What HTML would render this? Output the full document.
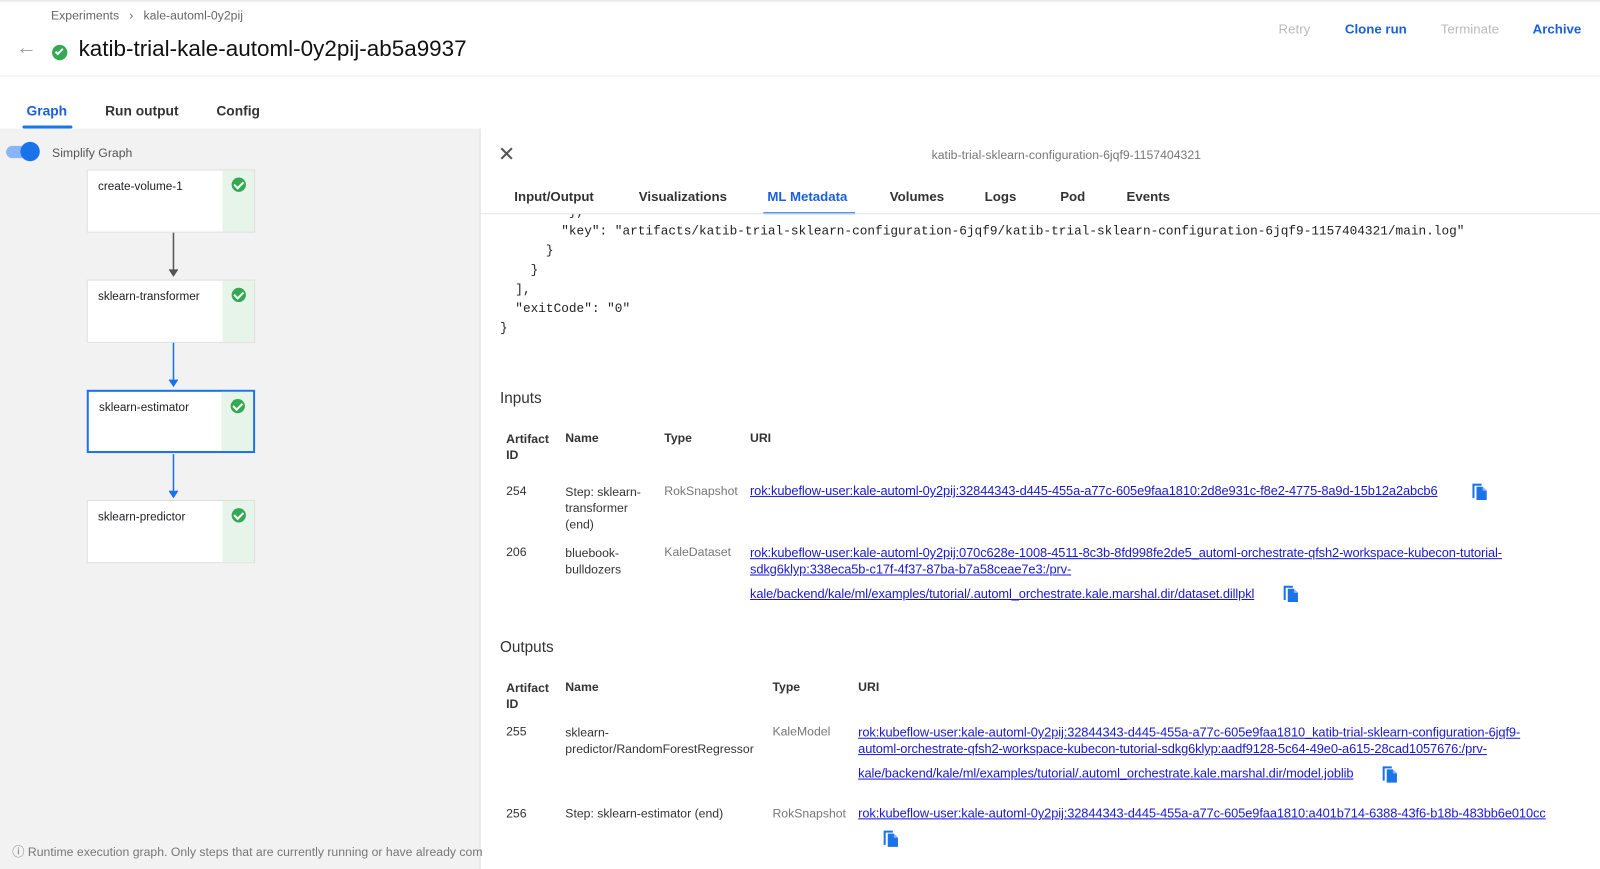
<!DOCTYPE html>
<html><head><style>
*{margin:0;padding:0;box-sizing:border-box}
body{width:1600px;height:852px;overflow:hidden;background:#fff;font-family:"Liberation Sans",sans-serif;color:#202124;position:relative}
#w{position:absolute;left:0;top:0;width:1568px;height:835px;transform:scale(1.0204);transform-origin:0 0}
.a{position:absolute;white-space:nowrap}
.t{font-size:12px}
.lnk{color:#1a1acc;text-decoration:underline;font-size:12.6px;letter-spacing:-0.1px}
.mono{font-family:"Liberation Mono",monospace;font-size:12.5px;color:#222;white-space:pre}
.node{position:absolute;left:85px;width:165px;height:62px;background:#fff;border:1px solid #ddd;font-size:11.5px}
.node span{position:absolute;left:10px;top:10px}
.node .g{position:absolute;right:0;top:0;width:31px;height:100%;background:#e6f4ea}
.chk{position:absolute;right:8px;top:7px;width:14px;height:14px;border-radius:50%;background:#34a853}
.chk:after{content:"";position:absolute;left:4px;top:2px;width:4px;height:7px;border:solid #fff;border-width:0 2px 2px 0;transform:rotate(45deg)}
.copy{position:absolute;width:16px;height:18px}
</style></head><body><div id="w">
<div class="a" style="left:0;top:0;width:1568px;height:3px;background:linear-gradient(#e6e6e6,#fff)"></div>
<div class="a t" style="left:50px;top:8px;color:#666">Experiments &nbsp;&nbsp;›&nbsp;&nbsp; kale-automl-0y2pij</div>
<div class="a" style="left:16px;top:36px;font-size:20px;color:#999">←</div>
<div class="a" style="left:51px;top:44px;width:15px;height:15px;border-radius:50%;background:#34a853"><div style="position:absolute;left:5px;top:2px;width:4px;height:8px;border:solid #fff;border-width:0 2px 2px 0;transform:rotate(45deg)"></div></div>
<div class="a" style="left:77px;top:35px;font-size:22px;color:#111">katib-trial-kale-automl-0y2pij-ab5a9937</div>
<div class="a" style="left:1253px;top:21px;font-size:13px;color:#bbb">Retry</div>
<div class="a" style="left:1318px;top:21px;font-size:13px;color:#1a5fe0;font-weight:bold">Clone run</div>
<div class="a" style="left:1412px;top:21px;font-size:13px;color:#bbb">Terminate</div>
<div class="a" style="left:1502px;top:21px;font-size:13px;color:#1a5fe0;font-weight:bold">Archive</div>
<div class="a" style="left:0;top:74px;width:1568px;height:1px;background:#eee"></div>
<div class="a" style="left:26px;top:101px;font-size:13.5px;color:#1a5fe0;font-weight:bold">Graph</div>
<div class="a" style="left:22px;top:123px;width:49px;height:3px;background:#1a73e8;border-radius:2px"></div>
<div class="a" style="left:103px;top:101px;font-size:13.5px;color:#333;font-weight:bold">Run output</div>
<div class="a" style="left:212px;top:101px;font-size:13.5px;color:#333;font-weight:bold">Config</div>
<div class="a" style="left:0;top:126px;width:471px;height:726px;background:#f2f2f2;border-right:1px solid #ddd"></div>
<div class="a" style="left:6px;top:143px;width:30px;height:12px;border-radius:6px;background:#8ab4f8"></div>
<div class="a" style="left:20px;top:139px;width:19px;height:19px;border-radius:50%;background:#1a73e8"></div>
<div class="a t" style="left:51px;top:143px;color:#555">Simplify Graph</div>
<div class="node" style="top:166px"><span>create-volume-1</span><div class="g"><div class="chk"></div></div></div>
<div class="node" style="top:274px"><span>sklearn-transformer</span><div class="g"><div class="chk"></div></div></div>
<div class="node" style="top:382px;border:2px solid #1a73e8"><span>sklearn-estimator</span><div class="g"><div class="chk"></div></div></div>
<div class="node" style="top:490px"><span>sklearn-predictor</span><div class="g"><div class="chk"></div></div></div>
<svg class="a" style="left:160px;top:228px" width="20" height="262"><path d="M10 0V40M6 36l4 6 4-6" stroke="#555" stroke-width="1.5" fill="#555"/><path d="M10 108V148M6 144l4 6 4-6" stroke="#1a73e8" stroke-width="1.5" fill="#1a73e8"/><path d="M10 217V257M6 253l4 6 4-6" stroke="#1a73e8" stroke-width="1.5" fill="#1a73e8"/></svg>
<div class="a" style="left:12px;top:826px;font-size:12px;color:#777">ⓘ Runtime execution graph. Only steps that are currently running or have already com</div>
<div class="a" style="left:488px;top:139px;font-size:20px;color:#555">✕</div>
<div class="a" style="left:913px;top:145px;font-size:12px;color:#777">katib-trial-sklearn-configuration-6jqf9-1157404321</div>
<div class="a" style="left:504px;top:185px;font-size:13px;color:#333;font-weight:bold">Input/Output</div>
<div class="a" style="left:626px;top:185px;font-size:13px;color:#333;font-weight:bold">Visualizations</div>
<div class="a" style="left:752px;top:185px;font-size:13px;color:#1a5fe0;font-weight:bold">ML Metadata</div>
<div class="a" style="left:748px;top:208px;width:90px;height:2px;background:#1a73e8"></div>
<div class="a" style="left:872px;top:185px;font-size:13px;color:#333;font-weight:bold">Volumes</div>
<div class="a" style="left:965px;top:185px;font-size:13px;color:#333;font-weight:bold">Logs</div>
<div class="a" style="left:1039px;top:185px;font-size:13px;color:#333;font-weight:bold">Pod</div>
<div class="a" style="left:1104px;top:185px;font-size:13px;color:#333;font-weight:bold">Events</div>
<div class="a" style="left:471px;top:209px;width:1097px;height:1px;background:#e6e6e6"></div>
<div class="a mono" style="left:490px;top:199px;line-height:19px;clip-path:inset(11px 0 0 0)">         },
        "key": "artifacts/katib-trial-sklearn-configuration-6jqf9/katib-trial-sklearn-configuration-6jqf9-1157404321/main.log"
      }
    }
  ],
  "exitCode": "0"
}</div>
<div class="a" style="left:490px;top:382px;font-size:15px;color:#333">Inputs</div>
<div class="a t" style="left:496px;top:422px;color:#333;font-weight:bold;line-height:16px">Artifact<br>ID</div>
<div class="a t" style="left:554px;top:422px;font-weight:bold;color:#333">Name</div>
<div class="a t" style="left:651px;top:422px;font-weight:bold;color:#333">Type</div>
<div class="a t" style="left:735px;top:422px;font-weight:bold;color:#333">URI</div>
<div class="a t" style="left:496px;top:474px;color:#333">254</div>
<div class="a t" style="left:554px;top:474px;color:#333;line-height:16px">Step: sklearn-<br>transformer<br>(end)</div>
<div class="a t" style="left:651px;top:474px;color:#777">RokSnapshot</div>
<div class="a lnk" style="left:735px;top:474px">rok:kubeflow-user:kale-automl-0y2pij:32844343-d445-455a-a77c-605e9faa1810:2d8e931c-f8e2-4775-8a9d-15b12a2abcb6</div>
<div class="a t" style="left:496px;top:534px;color:#333">206</div>
<div class="a t" style="left:554px;top:534px;color:#333;line-height:16px">bluebook-<br>bulldozers</div>
<div class="a t" style="left:651px;top:534px;color:#777">KaleDataset</div>
<div class="a lnk" style="left:735px;top:534px;line-height:16px">rok:kubeflow-user:kale-automl-0y2pij:070c628e-1008-4511-8c3b-8fd998fe2de5_automl-orchestrate-qfsh2-workspace-kubecon-tutorial-<br>sdkg6klyp:338eca5b-c17f-4f37-87ba-b7a58ceae7e3:/prv-</div>
<div class="a lnk" style="left:735px;top:575px">kale/backend/kale/ml/examples/tutorial/.automl_orchestrate.kale.marshal.dir/dataset.dillpkl</div>
<div class="a" style="left:490px;top:626px;font-size:15px;color:#333">Outputs</div>
<div class="a t" style="left:496px;top:666px;color:#333;font-weight:bold;line-height:16px">Artifact<br>ID</div>
<div class="a t" style="left:554px;top:666px;font-weight:bold;color:#333">Name</div>
<div class="a t" style="left:757px;top:666px;font-weight:bold;color:#333">Type</div>
<div class="a t" style="left:841px;top:666px;font-weight:bold;color:#333">URI</div>
<div class="a t" style="left:496px;top:710px;color:#333">255</div>
<div class="a t" style="left:554px;top:710px;color:#333;line-height:16px">sklearn-<br>predictor/RandomForestRegressor</div>
<div class="a t" style="left:757px;top:710px;color:#777">KaleModel</div>
<div class="a lnk" style="left:841px;top:710px;line-height:16px">rok:kubeflow-user:kale-automl-0y2pij:32844343-d445-455a-a77c-605e9faa1810_katib-trial-sklearn-configuration-6jqf9-<br>automl-orchestrate-qfsh2-workspace-kubecon-tutorial-sdkg6klyp:aadf9128-5c64-49e0-a615-28cad1057676:/prv-</div>
<div class="a lnk" style="left:841px;top:751px">kale/backend/kale/ml/examples/tutorial/.automl_orchestrate.kale.marshal.dir/model.joblib</div>
<div class="a t" style="left:496px;top:790px;color:#333">256</div>
<div class="a t" style="left:554px;top:790px;color:#333">Step: sklearn-estimator (end)</div>
<div class="a t" style="left:757px;top:790px;color:#777">RokSnapshot</div>
<div class="a lnk" style="left:841px;top:790px">rok:kubeflow-user:kale-automl-0y2pij:32844343-d445-455a-a77c-605e9faa1810:a401b714-6388-43f6-b18b-483bb6e010cc</div>
<svg class="copy" style="left:1442px;top:473px" viewBox="0 0 16 18"><path d="M1 1h9v2H3v12H1z" fill="#1a73e8"/><path d="M5 4h6l4 4v9H5z" fill="#1a73e8"/><path d="M11 4v4h4z" fill="#8ab4f8"/></svg>
<svg class="copy" style="left:1257px;top:573px" viewBox="0 0 16 18"><path d="M1 1h9v2H3v12H1z" fill="#1a73e8"/><path d="M5 4h6l4 4v9H5z" fill="#1a73e8"/><path d="M11 4v4h4z" fill="#8ab4f8"/></svg>
<svg class="copy" style="left:1354px;top:750px" viewBox="0 0 16 18"><path d="M1 1h9v2H3v12H1z" fill="#1a73e8"/><path d="M5 4h6l4 4v9H5z" fill="#1a73e8"/><path d="M11 4v4h4z" fill="#8ab4f8"/></svg>
<svg class="copy" style="left:865px;top:813px" viewBox="0 0 16 18"><path d="M1 1h9v2H3v12H1z" fill="#1a73e8"/><path d="M5 4h6l4 4v9H5z" fill="#1a73e8"/><path d="M11 4v4h4z" fill="#8ab4f8"/></svg>
</div></body></html>
